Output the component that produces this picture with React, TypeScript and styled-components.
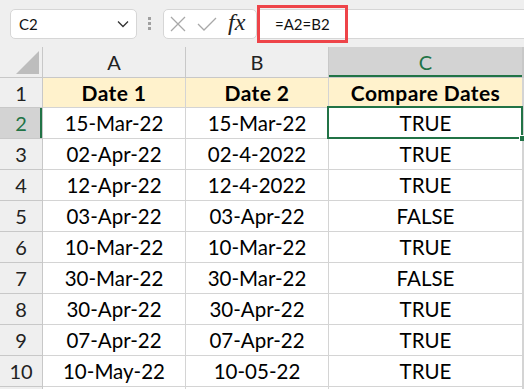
import styled, { createGlobalStyle, css } from 'styled-components';

const GlobalStyle = createGlobalStyle`
  html, body {
    margin: 0;
    padding: 0;
    background: #ffffff;
  }
  body {
    font-family: Lato, "Open Sans", sans-serif;
    color: #000;
    overflow: hidden;
  }
`;

const Sheet = styled.div`
  width: 524px;
  height: 389px;
  overflow: hidden;
`;

const Toolbar = styled.div`
  height: 47px;
  background: #efefef;
  display: flex;
  align-items: center;
  padding-left: 10px;
  box-sizing: border-box;
`;

const NameBox = styled.div`
  width: 127px;
  height: 30px;
  box-sizing: border-box;
  background: #fff;
  border: 1px solid #d6d6d6;
  border-radius: 5px;
  display: flex;
  align-items: center;
  justify-content: space-between;
  padding: 0 7px 0 8px;
  font-size: 15px;
  color: #111;
`;

const Grip = styled.div`
  width: 3px;
  margin: 0 12px 0 11px;
  display: flex;
  flex-direction: column;
  gap: 2px;

  span {
    display: block;
    width: 3px;
    height: 3px;
    background: #a0a0a0;
  }
`;

const ButtonsBox = styled.div`
  width: 94px;
  height: 30px;
  box-sizing: border-box;
  background: #fff;
  border: 1px solid #d6d6d6;
  border-radius: 5px;
  display: flex;
  align-items: center;
  padding-left: 6px;
  gap: 11px;
`;

const Fx = styled.span`
  font-family: "Liberation Serif", serif;
  font-style: italic;
  font-size: 24px;
  color: #222;
  line-height: 1;
  margin-top: -3px;
`;

const FormulaBar = styled.div`
  flex: 1;
  height: 30px;
  box-sizing: border-box;
  background: #fff;
  border-top: 1px solid #d6d6d6;
  border-bottom: 1px solid #d6d6d6;
  display: flex;
  align-items: center;
`;

const Highlight = styled.div`
  width: 91px;
  height: 38px;
  flex: none;
  box-sizing: border-box;
  border: 3px solid #ee4449;
  display: flex;
  align-items: center;
  padding-left: 15px;
  font-size: 15px;
  color: #111;
`;

const Grid = styled.div`
  display: grid;
  grid-template-columns: 43px 143px 143px 194px 1fr;
  grid-template-rows: 31px 30px repeat(9, 31px) 10px;
`;

type Kind = 'corner' | 'colHead' | 'rowHead' | 'title' | 'data';

const Cell = styled.div<{ $kind?: Kind; $active?: boolean }>`
  position: relative;
  box-sizing: border-box;
  display: flex;
  align-items: center;
  justify-content: center;
  font-size: 20.5px;
  border-right: 1px solid #d4d4d4;
  border-bottom: 1px solid #d4d4d4;
  background: #fff;
  white-space: nowrap;

  ${(p) =>
    (p.$kind === 'colHead' || p.$kind === 'rowHead' || p.$kind === 'corner') &&
    css`
      background: #efefef;
      border-color: #c8c8c8;
      color: #222;
      font-size: 20px;
    `}

  ${(p) =>
    p.$kind === 'title' &&
    css`
      background: #fff2cc;
      font-weight: 700;
      font-size: 21px;
      letter-spacing: 0.4px;
    `}

  ${(p) =>
    p.$active &&
    p.$kind === 'colHead' &&
    css`
      background: #d3d3d3;
      color: #217346;
      box-shadow: inset 0 -2px 0 #217346;
    `}

  ${(p) =>
    p.$active &&
    p.$kind === 'rowHead' &&
    css`
      background: #d3d3d3;
      color: #217346;
      box-shadow: inset -2px 0 0 #217346;
    `}

  ${(p) =>
    p.$active &&
    p.$kind === 'data' &&
    css`
      &::after {
        content: '';
        position: absolute;
        top: -2px;
        left: -2px;
        right: -1px;
        bottom: -1px;
        border: 2px solid #217346;
        pointer-events: none;
      }
      &::before {
        content: '';
        position: absolute;
        right: -3px;
        bottom: -3px;
        width: 5px;
        height: 5px;
        background: #217346;
        border-left: 1px solid #fff;
        border-top: 1px solid #fff;
        z-index: 2;
      }
    `}
`;

const Corner = styled.div`
  width: 0;
  height: 0;
  border-left: 23px solid transparent;
  border-bottom: 23px solid #bdbdbd;
  position: absolute;
  right: 3px;
  bottom: 3px;
`;

const rows: [string, string, string][] = [
  ['15-Mar-22', '15-Mar-22', 'TRUE'],
  ['02-Apr-22', '02-4-2022', 'TRUE'],
  ['12-Apr-22', '12-4-2022', 'TRUE'],
  ['03-Apr-22', '03-Apr-22', 'FALSE'],
  ['10-Mar-22', '10-Mar-22', 'TRUE'],
  ['30-Mar-22', '30-Mar-22', 'FALSE'],
  ['30-Apr-22', '30-Apr-22', 'TRUE'],
  ['07-Apr-22', '07-Apr-22', 'TRUE'],
  ['10-May-22', '10-05-22', 'TRUE'],
];

export default function App() {
  return (
    <Sheet>
      <GlobalStyle />
      <Toolbar>
        <NameBox>
          <span>C2</span>
          <svg width="12" height="8" viewBox="0 0 12 8">
            <path d="M1 1.5 L6 6.5 L11 1.5" fill="none" stroke="#333" strokeWidth="1.3" />
          </svg>
        </NameBox>
        <Grip>
          <span />
          <span />
          <span />
        </Grip>
        <ButtonsBox>
          <svg width="16" height="16" viewBox="0 0 16 16">
            <path d="M1 1 L15 15 M15 1 L1 15" stroke="#a8a8a8" strokeWidth="1.3" fill="none" />
          </svg>
          <svg width="20" height="16" viewBox="0 0 20 16">
            <path d="M1 8 L7 14 L19 2" stroke="#a8a8a8" strokeWidth="1.3" fill="none" />
          </svg>
          <Fx>fx</Fx>
        </ButtonsBox>
        <FormulaBar>
          <Highlight>=A2=B2</Highlight>
        </FormulaBar>
      </Toolbar>
      <Grid>
        <Cell $kind="corner">
          <Corner />
        </Cell>
        <Cell $kind="colHead">A</Cell>
        <Cell $kind="colHead">B</Cell>
        <Cell $kind="colHead" $active>C</Cell>
        <Cell $kind="colHead" />

        <Cell $kind="rowHead">1</Cell>
        <Cell $kind="title">Date 1</Cell>
        <Cell $kind="title">Date 2</Cell>
        <Cell $kind="title">Compare Dates</Cell>
        <Cell $kind="data" />

        {rows.map((r, i) => (
          <>
            <Cell key={`h${i}`} $kind="rowHead" $active={i === 0}>{i + 2}</Cell>
            <Cell key={`a${i}`} $kind="data">{r[0]}</Cell>
            <Cell key={`b${i}`} $kind="data">{r[1]}</Cell>
            <Cell key={`c${i}`} $kind="data" $active={i === 0}>{r[2]}</Cell>
            <Cell key={`d${i}`} $kind="data" />
          </>
        ))}

        <Cell $kind="rowHead" />
        <Cell $kind="data" />
        <Cell $kind="data" />
        <Cell $kind="data" />
        <Cell $kind="data" />
      </Grid>
    </Sheet>
  );
}
